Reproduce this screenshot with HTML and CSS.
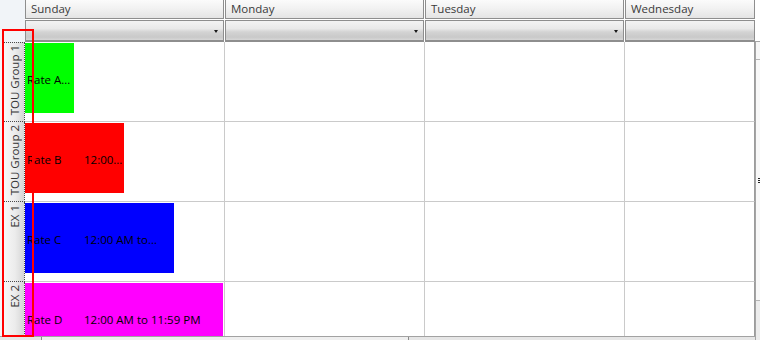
FILE: index.html
```html
<!DOCTYPE html>
<html>
<head>
<meta charset="utf-8">
<link rel="stylesheet" href="styles.css">
</head>
<body>
<div class="app">
  <div class="main">
    <div class="head">
      <div class="corner"></div>
      <div class="hcol">
        <div class="hcell title">Sunday</div>
        <div class="hcell filter"><span class="caret"></span></div>
      </div>
      <div class="hcol">
        <div class="hcell title">Monday</div>
        <div class="hcell filter"><span class="caret"></span></div>
      </div>
      <div class="hcol">
        <div class="hcell title">Tuesday</div>
        <div class="hcell filter"><span class="caret"></span></div>
      </div>
      <div class="hcol last">
        <div class="hcell title">Wednesday</div>
        <div class="hcell filter"></div>
      </div>
    </div>
    <div class="body">
      <div class="row">
        <div class="pad"></div>
        <div class="rh first"><span class="rh-text">TOU Group 1</span></div>
        <div class="day"><div class="bar green" style="width:49px" title="Rate A 12:00 AM to 11:59 PM">Rate A...</div></div>
        <div class="day"></div>
        <div class="day"></div>
        <div class="day last"></div>
      </div>
      <div class="row">
        <div class="pad"></div>
        <div class="rh"><span class="rh-text">TOU Group 2</span></div>
        <div class="day"><div class="bar red" style="width:99px" title="Rate B 12:00 AM to 11:59 PM">Rate B	12:00...</div></div>
        <div class="day"></div>
        <div class="day"></div>
        <div class="day last"></div>
      </div>
      <div class="row">
        <div class="pad"></div>
        <div class="rh"><span class="rh-text">EX 1</span></div>
        <div class="day"><div class="bar blue" style="width:149px" title="Rate C 12:00 AM to 11:59 PM">Rate C	12:00 AM to...</div></div>
        <div class="day"></div>
        <div class="day"></div>
        <div class="day last"></div>
      </div>
      <div class="row">
        <div class="pad"></div>
        <div class="rh"><span class="rh-text">EX 2</span></div>
        <div class="day"><div class="bar magenta" style="width:198px">Rate D	12:00 AM to 11:59 PM</div></div>
        <div class="day"></div>
        <div class="day"></div>
        <div class="day last"></div>
      </div>
    </div>
    <div class="hscroll"><div class="hthumb"></div></div>
  </div>
  <div class="vscroll">
    <div class="vtrack">
      <div class="vbtn"></div>
      <div class="vthumb"><span class="grip"></span></div>
    </div>
  </div>
  <div class="highlight"></div>
</div>
</body>
</html>
```

FILE: styles.css
```css
html, body {
  margin: 0;
  padding: 0;
  background: #ffffff;
}

.app {
  position: relative;
  width: 760px;
  height: 340px;
  overflow: hidden;
  display: flex;
  font-family: "Open Sans", "Noto Sans", sans-serif;
  font-size: 11.5px;
  color: #000;
}

.main {
  width: 755px;
  display: flex;
  flex-direction: column;
}

.head {
  display: flex;
  height: 42px;
  flex: none;
}

.corner {
  width: 25px;
  background: #f1f4f8;
}

.hcol {
  width: 200px;
  display: flex;
  flex-direction: column;
  gap: 1px;
}

.hcol.last {
  width: 130px;
}

.hcell {
  box-sizing: border-box;
  margin-right: 1px;
  border-left: 1px solid #8e8e8e;
  border-right: 1px solid #8e8e8e;
}

.hcol.last .hcell {
  margin-right: 0;
}

.title {
  height: 19px;
  border-bottom: 1px solid #8e8e8e;
  background: linear-gradient(#fbfbfb, #f1f1f1 50%, #e4e4e4);
  color: #3a3a3a;
  line-height: 18px;
  padding-left: 5px;
}

.filter {
  height: 22px;
  border-top: 1px solid #8e8e8e;
  border-bottom: 2px solid #8e8e8e;
  background: linear-gradient(#f3f3f3 0%, #e9e9e9 40%, #d3d3d3 58%, #c9c9c9 85%, #d6d6d6 100%);
  display: flex;
  justify-content: flex-end;
  align-items: center;
  padding-right: 5px;
}

.caret {
  width: 0;
  height: 0;
  border-left: 2.5px solid transparent;
  border-right: 2.5px solid transparent;
  border-top: 3px solid #1a1a1a;
  margin-top: 1px;
}

.body {
  height: 294px;
  overflow: hidden;
  flex: none;
}

.row {
  display: grid;
  grid-template-columns: 3px 22px 200px 200px 200px 130px;
  height: 80px;
}

.pad {
  background: #f4f6f9;
}

.rh {
  box-sizing: border-box;
  border-left: 1px dotted #4a4a4a;
  border-right: 1px dotted #4a4a4a;
  border-bottom: 1px dotted #4a4a4a;
  background: linear-gradient(to right, #f7f7f7, #ececec 55%, #d6d6d6);
  display: flex;
  justify-content: center;
  align-items: flex-start;
  padding-top: 3px;
}

.rh.first {
  border-top: 1px dotted #4a4a4a;
  padding-top: 2px;
}

.rh-text {
  writing-mode: vertical-rl;
  transform: rotate(180deg);
  color: #333;
  white-space: nowrap;
  margin-left: 1px;
}

.day {
  box-sizing: border-box;
  border-right: 1px solid #cacaca;
  border-bottom: 1px solid #cacaca;
  padding-top: 1px;
}

.day.last {
  border-right: 1px solid #9c9c9c;
}

.bar {
  box-sizing: border-box;
  height: 70px;
  line-height: 70px;
  padding-top: 2px;
  padding-left: 2px;
  white-space: pre;
  tab-size: 57px;
  overflow: hidden;
  color: #000;
}

.green { background: #00ff00; }
.red { background: #ff0000; }
.blue { background: #0000ff; }
.magenta { background: #ff00ff; }

.hscroll {
  flex: 1;
  box-sizing: border-box;
  border-top: 1px solid #a2a2a2;
  background: #e6e6e6;
  padding-left: 41px;
}

.hthumb {
  width: 368px;
  height: 100%;
  box-sizing: border-box;
  border-left: 1px solid #8a8a8a;
  border-right: 1px solid #8a8a8a;
  background: #efefef;
}

.vscroll {
  width: 5px;
  padding-top: 41px;
  box-sizing: border-box;
}

.vtrack {
  height: 100%;
  box-sizing: border-box;
  border-left: 1px solid #a4a4a4;
  border-top: 1px solid #a4a4a4;
  background: #ececec;
  display: flex;
  flex-direction: column;
}

.vbtn {
  height: 17px;
  border-bottom: 1px solid #b4b4b4;
  background: #f6f6f6;
}

.vthumb {
  height: 240px;
  border-bottom: 1px solid #b4b4b4;
  background: #f8f8f8;
  display: flex;
  align-items: center;
  justify-content: flex-end;
}

.grip {
  width: 2px;
  height: 5px;
  background: repeating-linear-gradient(#222 0 1px, transparent 1px 2px);
}

.highlight {
  position: absolute;
  left: 2px;
  top: 29px;
  width: 32px;
  height: 308px;
  box-sizing: border-box;
  border: 2px solid #ff0000;
}
```
